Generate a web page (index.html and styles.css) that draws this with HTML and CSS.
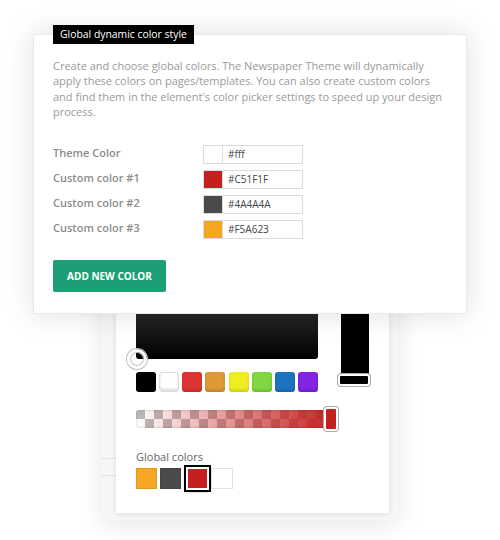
FILE: index.html
```html
<!DOCTYPE html>
<html>
<head>
<meta charset="utf-8">
<link rel="stylesheet" href="styles.css">
</head>
<body>
<div class="stage">
  <div class="back">
    <div class="picker">
      <div class="pick-row">
        <div class="pick-left">
          <div class="sv-box"><span class="sv-handle"></span></div>
          <div class="presets">
            <span class="preset" style="background:#000"></span>
            <span class="preset light" style="background:#fff"></span>
            <span class="preset" style="background:#dd3333"></span>
            <span class="preset" style="background:#dd9933"></span>
            <span class="preset" style="background:#eeee22"></span>
            <span class="preset" style="background:#81d742"></span>
            <span class="preset" style="background:#1e73be"></span>
            <span class="preset" style="background:#8224e3"></span>
          </div>
        </div>
        <div class="hue"><span class="hue-handle"></span></div>
      </div>
      <div class="alpha"><span class="alpha-handle"></span></div>
      <div class="gc-title">Global colors</div>
      <div class="gc-row">
        <span class="gc" style="background:#F5A623;border-color:#e09a1e"></span>
        <span class="gc" style="background:#4A4A4A;border-color:#444"></span>
        <span class="gc sel" style="background:#C51F1F"></span>
        <span class="gc white" style="background:#fff"></span>
      </div>
    </div>
    <span class="dash"></span>
  </div>

  <div class="card">
    <div class="tag">Global dynamic color style</div>
    <p class="desc">Create and choose global colors. The Newspaper Theme will dynamically apply these colors on pages/templates. You can also create custom colors and find them in the element's color picker settings to speed up your design process.</p>
    <div class="rows">
      <div class="row"><span class="lbl">Theme Color</span><span class="field"><span class="sw" style="background:#fff"></span><span class="val">#fff</span></span></div>
      <div class="row"><span class="lbl">Custom color #1</span><span class="field"><span class="sw" style="background:#C51F1F"></span><span class="val">#C51F1F</span></span></div>
      <div class="row"><span class="lbl">Custom color #2</span><span class="field"><span class="sw" style="background:#4A4A4A"></span><span class="val">#4A4A4A</span></span></div>
      <div class="row"><span class="lbl">Custom color #3</span><span class="field"><span class="sw" style="background:#F5A623"></span><span class="val">#F5A623</span></span></div>
    </div>
    <div class="btn">ADD NEW COLOR</div>
  </div>
</div>
</body>
</html>
```

FILE: styles.css
```css
html, body {
  margin: 0;
  padding: 0;
  background: #fff;
  font-family: "Open Sans", "Liberation Sans", sans-serif;
}
.stage {
  position: relative;
  width: 500px;
  height: 540px;
  overflow: hidden;
}

/* back color picker panel */
.back {
  position: relative;
  margin: 270px 0 0 102px;
  width: 296px;
  height: 250px;
  background: #f6f6f6;
  box-shadow: 0 4px 24px rgba(0,0,0,0.10);
}
.picker {
  position: relative;
  z-index: 1;
  margin-left: 14px;
  width: 273px;
  height: 243px;
  background: #fff;
  box-shadow: 0 1px 6px rgba(0,0,0,0.10);
  padding: 20px 0 0 20px;
  box-sizing: border-box;
}
.pick-row {
  display: flex;
  gap: 23px;
}
.pick-left {
  width: 182px;
}
.sv-box {
  position: relative;
  height: 69px;
  border-radius: 0 0 3px 3px;
  background: linear-gradient(to bottom, #3a3a3a, #000);
}
.sv-handle {
  position: absolute;
  left: -9px;
  bottom: -10px;
  width: 14px;
  height: 14px;
  border-radius: 50%;
  border: 3px solid #fff;
  box-shadow: 0 0 0 1px #bbb, inset 0 0 0 1px #bbb;
}
.presets {
  display: flex;
  justify-content: space-between;
  margin-top: 13px;
}
.preset {
  width: 20px;
  height: 20px;
  border-radius: 3px;
  box-shadow: inset 0 -2px 3px rgba(0,0,0,0.15);
}
.preset.light {
  box-sizing: border-box;
  border: 1px solid #ddd;
}
.hue {
  position: relative;
  width: 28px;
  height: 88px;
  background: #000;
}
.hue-handle {
  position: absolute;
  left: -3px;
  bottom: -8px;
  width: 28px;
  height: 8px;
  background: #000;
  border: 2px solid #fff;
  border-radius: 3px;
  box-shadow: 0 0 0 1px #aaa;
}
.alpha {
  position: relative;
  margin-top: 18px;
  width: 199px;
  height: 18px;
  border-radius: 3px;
  background:
    linear-gradient(to right, rgba(197,31,31,0), rgba(197,31,31,1)),
    repeating-conic-gradient(#fff 0 25%, #bbb 0 50%) 0 0 / 18px 18px;
  box-shadow: inset 0 0 3px rgba(0,0,0,0.2);
}
.alpha-handle {
  position: absolute;
  left: 188px;
  top: -3px;
  width: 10px;
  height: 20px;
  background: #C51F1F;
  border: 2px solid #fff;
  border-radius: 3px;
  box-shadow: 0 0 0 1px #aaa;
}
.gc-title {
  margin-top: 21px;
  font-size: 11px;
  line-height: 15px;
  color: #666;
}
.gc-row {
  display: flex;
  margin-top: 3px;
  align-items: center;
}
.gc {
  width: 19px;
  height: 19px;
  border: 1px solid transparent;
  margin-right: 3px;
}
.gc.sel {
  width: 19px;
  height: 19px;
  border: 2px solid #fff;
  outline: 2px solid #000;
  margin: 0 2px 0 2px;
  box-shadow: 0 1px 4px rgba(0,0,0,0.4);
}
.gc.white {
  border-color: #e2e2e2;
  width: 20px;
}
.dash {
  position: absolute;
  left: 0;
  top: 188px;
  width: 14px;
  height: 16px;
  border: 1px dashed #ddd;
  border-left: none;
}

/* top card */
.card {
  position: absolute;
  z-index: 5;
  left: 33px;
  top: 34px;
  width: 434px;
  height: 280px;
  box-sizing: border-box;
  background: #fff;
  border: 1px solid #e9e9e9;
  box-shadow: 0 0 28px rgba(0,0,0,0.13);
  padding: 23px 19px 0 19px;
}
.tag {
  position: absolute;
  left: 19px;
  top: -10px;
  height: 19px;
  line-height: 19px;
  padding: 0 7px;
  background: #000;
  color: #fff;
  font-size: 10.4px;
}
.desc {
  margin: 0;
  font-size: 11px;
  line-height: 15.4px;
  color: #9a9a9a;
}
.rows {
  margin-top: 25px;
  display: flex;
  flex-direction: column;
  gap: 6px;
}
.row {
  display: flex;
  align-items: center;
  height: 19px;
}
.lbl {
  width: 150px;
  font-size: 11px;
  font-weight: 600;
  color: #8c8c8c;
  margin-top: -3px;
}
.field {
  display: flex;
  align-items: center;
  width: 100px;
  height: 19px;
  box-sizing: border-box;
  border: 1px solid #dcdcdc;
}
.sw {
  width: 18px;
  height: 17px;
  border-right: 1px solid #dcdcdc;
}
.val {
  margin-left: 5px;
  font-size: 10px;
  color: #444;
}
.btn {
  margin-top: 21px;
  width: 113px;
  height: 32px;
  line-height: 32px;
  text-align: center;
  background: #1c9f76;
  color: #fff;
  font-size: 10px;
  font-weight: 700;
  border-radius: 2px;
}
```
